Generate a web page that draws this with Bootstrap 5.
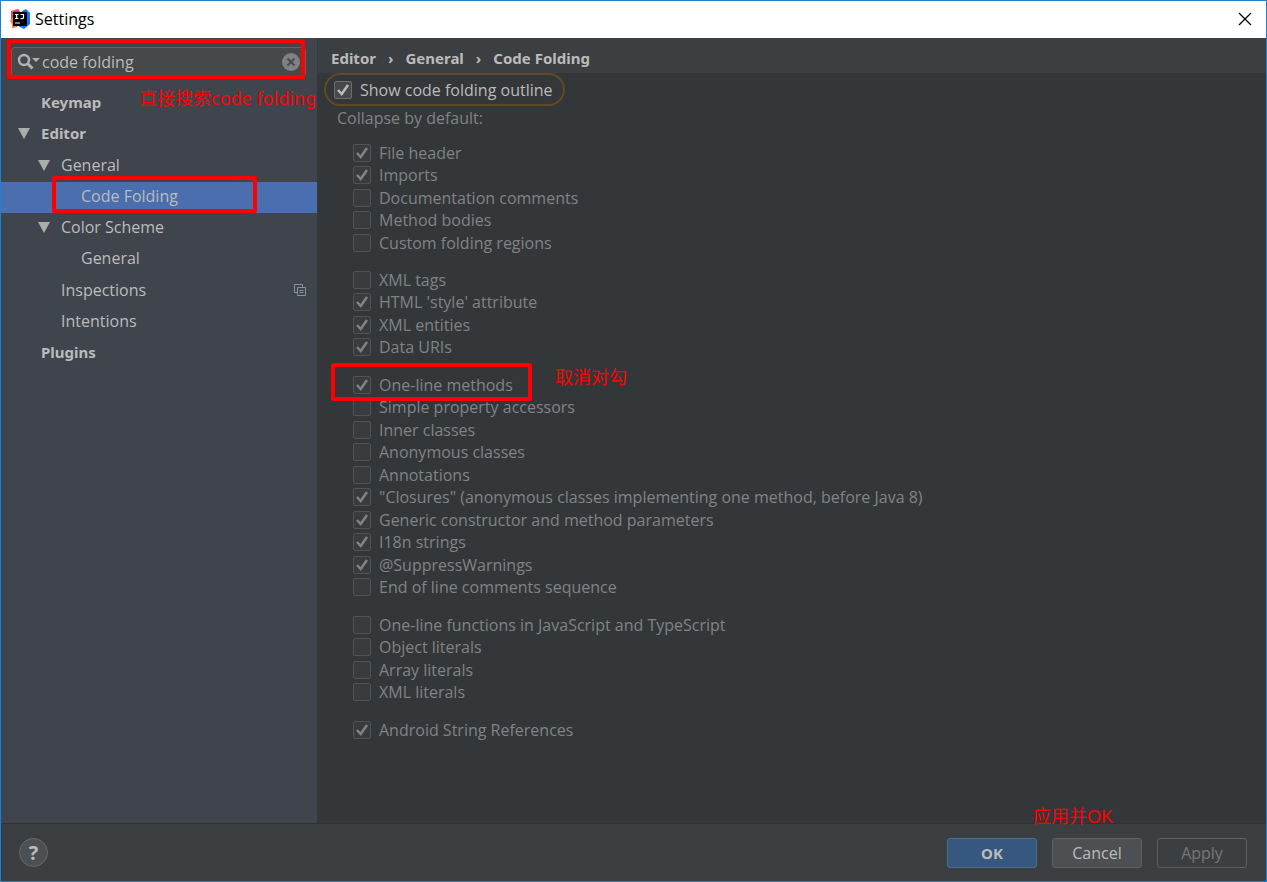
<!DOCTYPE html>
<html lang="en">
<head>
<meta charset="utf-8">
<meta name="viewport" content="width=device-width, initial-scale=1">
<title>Settings</title>
<link href="https://cdn.jsdelivr.net/npm/bootstrap@5.3.0/dist/css/bootstrap.min.css" rel="stylesheet">
<style>
  body { font-family: "Open Sans", "Noto Sans CJK SC", sans-serif; font-size: 16px; line-height: 22px; color: #bbb; background: #3c3f41; }
  .window { border: 1px solid #1883d7; }
  .titlebar { height: 37px; background: #fff; color: #000; padding: 0 14px 2px 9px; gap: 4px; }
  .close-btn { line-height: 0; }
  .sidebar { width: 316px; background: #40444d; }
  .search { margin: 9px 11px 0 10px; height: 30px; border: 1px solid #616466; border-radius: 4px; background: #45494a; padding: 0 5px; }
  .search input { background: none; border: 0; outline: 0; color: #bbb; padding: 0; height: 28px; min-width: 0; }
  .tree { display: grid; grid-auto-rows: 31px 32px 31px 31px; margin: 11px 0 0; }
  .tree a { color: #bbb; text-decoration: none; display: flex; align-items: center; height: 31px; position: relative; padding-right: 11px; padding-bottom: 3px; }
  .strong-text { font-family: "Noto Sans", sans-serif; font-size: 15px; font-weight: 700; }
  .lvl-0 { padding-left: 17px; }
  .lvl-1 { padding-left: 37px; }
  .lvl-2 { padding-left: 57px; }
  .tree .chosen { background: #4b6eaf; }
  .twisty { width: 12px; height: 12px; margin-right: 11px; flex: none; }
  .content-pane { background: #343739; border-left: 1px solid #36393b; }
  .crumbs { height: 35px; background: #3c3f41; padding: 9px 13px 0; --bs-breadcrumb-divider: "›"; --bs-breadcrumb-divider-color: #bbb; --bs-breadcrumb-item-padding-x: 12px; }
  .crumbs a, .crumbs .active { color: #bbb; text-decoration: none; }
  .outline-opt { border: 2px solid #5f4a22; border-radius: 17px; height: 33px; margin: 0 0 0 6px; padding: 0 10px 0 8px; gap: 8px; color: #bbb; }
  .opt-box { appearance: none; width: 18px; height: 18px; margin: 0; flex: none; border: 1px solid #505355; border-radius: 2px; background: #393c3e center / 16px 16px no-repeat; }
  .opt-box:checked { background-image: url("data:image/svg+xml,%3Csvg xmlns='http://www.w3.org/2000/svg' viewBox='0 0 16 16'%3E%3Cpath d='M3 8l3.700 4L13 3' fill='none' stroke='%23808385' stroke-width='2.500'/%3E%3C/svg%3E"); }
  .outline-opt .opt-box { border-color: #6b6e70; background-color: #45494a; }
  .outline-opt .opt-box:checked { background-image: url("data:image/svg+xml,%3Csvg xmlns='http://www.w3.org/2000/svg' viewBox='0 0 16 16'%3E%3Cpath d='M3 8l3.700 4L13 3' fill='none' stroke='%23bbb' stroke-width='2.500'/%3E%3C/svg%3E"); }
  .collapse-set { color: #808385; }
  .collapse-set legend { font-size: 16px; line-height: 22px; padding-left: 19px; margin: 1px 0 13px; }
  .options { display: grid; grid-auto-rows: 22px 23px; margin: 0 0 15px; padding-left: 35px; }
  .options label { gap: 8px; height: 22px; }
  .marked { position: relative; }
  .marked::after { content: ""; position: absolute; border: 4px solid #f00; border-radius: 2px; pointer-events: none; z-index: 2; }
  .search.marked::after { inset: -9px 0 -3px -5px; }
  .tree .marked::after { inset: -6px 60px 0 51px; }
  .options .marked::after { inset: -11px -19px -5px -22px; }
  .note { position: absolute; color: #f00; font-family: "Noto Sans", "Noto Sans CJK SC", sans-serif; font-size: 18px; line-height: 24px; white-space: nowrap; z-index: 3; }
  .note-search { left: 127px; top: 38px; }
  .note-method { left: 202px; top: -9px; }
  .note-apply { left: 86px; top: -33px; font-family: "Liberation Sans", "Noto Sans CJK SC", sans-serif; }
  .footer { height: 58px; border-top: 1px solid #323232; padding: 0 19px 0 18px; }
  .btn-row { gap: 15px; }
  .dlg-btn { width: 90px; height: 30px; padding: 0; font-size: 16px; line-height: 22px; border-radius: 3px; border: 1px solid #5e6162; background: #4c5052; color: #bbb; }
  .dlg-btn.ok { background: #365880; border-color: #4c708c; font-family: "Noto Sans", sans-serif; font-size: 15px; font-weight: 700; }
  .dlg-btn:disabled { background: none; border-color: #5e6162; color: #777; opacity: 1; }
  .help-btn { width: 29px; height: 29px; padding: 0; border-radius: 50%; border: 1px solid #66696b; background: #4c5052; color: #bbb; font-size: 20px; font-weight: 700; line-height: 26px; }
</style>
</head>
<body>
<div class="window d-flex flex-column min-vh-100">
  <header class="titlebar d-flex align-items-center">
    <svg width="21" height="20" viewBox="0 0 21 20" aria-hidden="true">
      <path d="M1 2l7-2 4 5-5 13-5 1 1-5-2-4z" fill="#f0415e"/>
      <path d="M0 11l4-3 4 9-5 2z" fill="#f98a3c"/>
      <path d="M12 2l4-2 4 4v11l-6 5-6-3z" fill="#087cfa"/>
      <path d="M3 3h14v14H3z" fill="#000"/>
      <path d="M5 5.500h3.500M6.700 5.500v4M5 9.500h3.500M10.500 5.500h3v3q0 1.300-3 1M5 14h5" fill="none" stroke="#fff" stroke-width="1.200"/>
    </svg>
    <span>Settings</span>
    <button type="button" class="close-btn btn p-0 border-0 ms-auto" aria-label="Close">
      <svg width="14" height="14" viewBox="0 0 14 14"><path d="M1 1l12 12M13 1L1 13" stroke="#000" stroke-width="1.300"/></svg>
    </button>
  </header>

  <div class="d-flex flex-grow-1">
    <nav class="sidebar flex-shrink-0" aria-label="Settings sections">
      <div class="search marked d-flex align-items-center">
        <svg class="flex-shrink-0" width="25" height="18" viewBox="0 0 25 18" aria-hidden="true">
          <circle cx="7" cy="7" r="5" fill="none" stroke="#afb1b3" stroke-width="2.500"/>
          <path d="M10.500 10.500l5 5" stroke="#afb1b3" stroke-width="3"/>
          <path d="M15 5h8l-4 4z" fill="#afb1b3"/>
        </svg>
        <input type="text" class="flex-grow-1" value="code folding" aria-label="Search settings">
        <button type="button" class="btn p-0 border-0 lh-1 d-flex" aria-label="Clear">
          <svg width="18" height="18" viewBox="0 0 18 18"><circle cx="9" cy="9" r="9" fill="#7f8283"/><path d="M5.500 5.500l7 7M12.500 5.500l-7 7" stroke="#45494a" stroke-width="1.800"/></svg>
        </button>
        <span class="note note-search">直接搜索code folding</span>
      </div>
      <ul class="tree list-unstyled">
        <li><a href="#" class="lvl-0 strong-text"><span class="twisty"></span>Keymap</a></li>
        <li><a href="#" class="lvl-0 strong-text"><svg class="twisty" viewBox="0 0 12 12"><path d="M0 1h12L6 12z" fill="#adadad"/></svg>Editor</a></li>
        <li><a href="#" class="lvl-1"><svg class="twisty" viewBox="0 0 12 12"><path d="M0 1h12L6 12z" fill="#adadad"/></svg>General</a></li>
        <li><a href="#" class="lvl-2 chosen marked" aria-current="page"><span class="twisty"></span>Code Folding</a></li>
        <li><a href="#" class="lvl-1"><svg class="twisty" viewBox="0 0 12 12"><path d="M0 1h12L6 12z" fill="#adadad"/></svg>Color Scheme</a></li>
        <li><a href="#" class="lvl-2"><span class="twisty"></span>General</a></li>
        <li><a href="#" class="lvl-1"><span class="twisty"></span>Inspections
          <svg class="ms-auto" width="12" height="12" viewBox="0 0 12 12" aria-hidden="true"><path d="M8.500 3V.500h-8v8H3M3.500 3.500h8v8h-8zM5.500 6.500h4M5.500 8.500h4" fill="none" stroke="#87939a"/></svg></a></li>
        <li><a href="#" class="lvl-1"><span class="twisty"></span>Intentions</a></li>
        <li><a href="#" class="lvl-0 strong-text"><span class="twisty"></span>Plugins</a></li>
      </ul>
    </nav>

    <main class="content-pane flex-grow-1">
      <nav aria-label="breadcrumb">
        <ol class="breadcrumb crumbs mb-0 strong-text">
          <li class="breadcrumb-item"><a href="#">Editor</a></li>
          <li class="breadcrumb-item"><a href="#">General</a></li>
          <li class="breadcrumb-item active" aria-current="page">Code Folding</li>
        </ol>
      </nav>
      <label class="outline-opt d-inline-flex align-items-center"><input type="checkbox" class="opt-box" checked>Show code folding outline</label>
      <fieldset class="collapse-set">
        <legend>Collapse by default:</legend>
        <div class="options">
          <div><label class="d-inline-flex align-items-center"><input type="checkbox" class="opt-box" checked>File header</label></div>
          <div><label class="d-inline-flex align-items-center"><input type="checkbox" class="opt-box" checked>Imports</label></div>
          <div><label class="d-inline-flex align-items-center"><input type="checkbox" class="opt-box">Documentation comments</label></div>
          <div><label class="d-inline-flex align-items-center"><input type="checkbox" class="opt-box">Method bodies</label></div>
          <div><label class="d-inline-flex align-items-center"><input type="checkbox" class="opt-box">Custom folding regions</label></div>
        </div>
        <div class="options">
          <div><label class="d-inline-flex align-items-center"><input type="checkbox" class="opt-box">XML tags</label></div>
          <div><label class="d-inline-flex align-items-center"><input type="checkbox" class="opt-box" checked>HTML 'style' attribute</label></div>
          <div><label class="d-inline-flex align-items-center"><input type="checkbox" class="opt-box" checked>XML entities</label></div>
          <div><label class="d-inline-flex align-items-center"><input type="checkbox" class="opt-box" checked>Data URIs</label></div>
        </div>
        <div class="options">
          <div><label class="marked d-inline-flex align-items-center"><input type="checkbox" class="opt-box" checked>One-line methods<span class="note note-method" lang="zh">取消对勾</span></label></div>
          <div><label class="d-inline-flex align-items-center"><input type="checkbox" class="opt-box">Simple property accessors</label></div>
          <div><label class="d-inline-flex align-items-center"><input type="checkbox" class="opt-box">Inner classes</label></div>
          <div><label class="d-inline-flex align-items-center"><input type="checkbox" class="opt-box">Anonymous classes</label></div>
          <div><label class="d-inline-flex align-items-center"><input type="checkbox" class="opt-box">Annotations</label></div>
          <div><label class="d-inline-flex align-items-center"><input type="checkbox" class="opt-box" checked>"Closures" (anonymous classes implementing one method, before Java 8)</label></div>
          <div><label class="d-inline-flex align-items-center"><input type="checkbox" class="opt-box" checked>Generic constructor and method parameters</label></div>
          <div><label class="d-inline-flex align-items-center"><input type="checkbox" class="opt-box" checked>I18n strings</label></div>
          <div><label class="d-inline-flex align-items-center"><input type="checkbox" class="opt-box" checked>@SuppressWarnings</label></div>
          <div><label class="d-inline-flex align-items-center"><input type="checkbox" class="opt-box">End of line comments sequence</label></div>
        </div>
        <div class="options">
          <div><label class="d-inline-flex align-items-center"><input type="checkbox" class="opt-box">One-line functions in JavaScript and TypeScript</label></div>
          <div><label class="d-inline-flex align-items-center"><input type="checkbox" class="opt-box">Object literals</label></div>
          <div><label class="d-inline-flex align-items-center"><input type="checkbox" class="opt-box">Array literals</label></div>
          <div><label class="d-inline-flex align-items-center"><input type="checkbox" class="opt-box">XML literals</label></div>
        </div>
        <div class="options">
          <div><label class="d-inline-flex align-items-center"><input type="checkbox" class="opt-box" checked>Android String References</label></div>
        </div>
      </fieldset>
    </main>
  </div>

  <footer class="footer d-flex align-items-center justify-content-between">
    <button type="button" class="help-btn btn" aria-label="Help">?</button>
    <div class="btn-row position-relative d-flex">
      <span class="note note-apply" lang="zh">应用并OK</span>
      <button type="button" class="btn dlg-btn ok">OK</button>
      <button type="button" class="btn dlg-btn">Cancel</button>
      <button type="button" class="btn dlg-btn" disabled>Apply</button>
    </div>
  </footer>
</div>
<script src="https://cdn.jsdelivr.net/npm/bootstrap@5.3.0/dist/js/bootstrap.bundle.min.js"></script>
</body>
</html>
